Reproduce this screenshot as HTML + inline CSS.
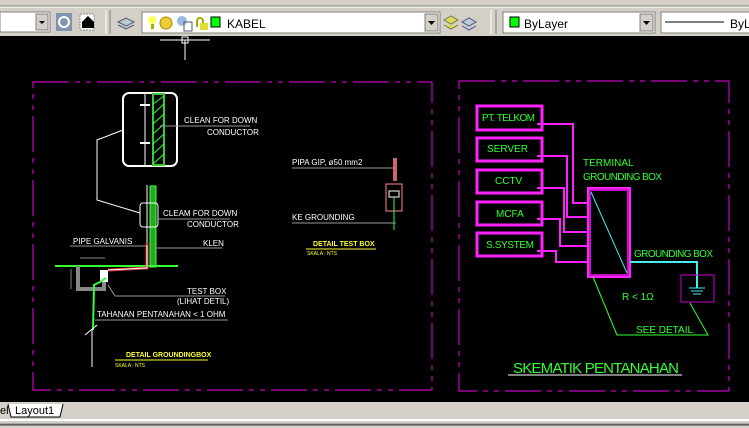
<!DOCTYPE html><html><head><style>
body{margin:0;width:749px;height:428px;overflow:hidden;background:#000;font-family:"Liberation Sans",sans-serif}
.tb{position:absolute;left:0;top:0;width:749px;height:36px;background:#d4d0c8}
svg text{font-family:"Liberation Sans",sans-serif}
</style></head><body>
<div class="tb"></div>
<svg width="749" height="428" style="position:absolute;left:0;top:0">
<line x1="0" y1="6" x2="749" y2="6" stroke="#808080"/><line x1="0" y1="7" x2="749" y2="7" stroke="#fff"/>
<rect x="0" y="12" width="50" height="20" fill="#fff" stroke="#808080"/>
<rect x="36" y="14" width="12" height="16" fill="#d4d0c8" stroke="#808080"/><path d="M39 21h6l-3 3z" fill="#000"/>
<rect x="56" y="13" width="16" height="18" fill="#7f95b0"/><circle cx="64" cy="22" r="5" fill="none" stroke="#fff" stroke-width="2"/>
<rect x="80" y="14" width="14" height="16" fill="#fff" stroke="#888" stroke-dasharray="2 1"/><path d="M82 22l6-6 6 6v6h-12z" fill="#000"/>
<line x1="106" y1="10" x2="106" y2="34" stroke="#fff"/><line x1="110" y1="10" x2="110" y2="34" stroke="#808080"/>
<path d="M118 22l8-4 8 4-8 4z M118 25l8 4 8-4" fill="#bcc" stroke="#557"/>
<rect x="142" y="12" width="298" height="21" fill="#fff" stroke="#808080"/>
<circle cx="152" cy="20" r="4" fill="#ff5"/><rect x="151" y="24" width="3" height="5" fill="#aa0"/>
<circle cx="166" cy="23" r="6" fill="#ec3" stroke="#a80"/>
<circle cx="182" cy="21" r="5" fill="#9bd"/><rect x="184" y="22" width="8" height="9" fill="none" stroke="#557"/>
<path d="M197 27v-6a3 3 0 016 0v2" fill="none" stroke="#aa0" stroke-width="2"/><rect x="200" y="23" width="8" height="7" fill="#dd3"/>
<rect x="211" y="17" width="9" height="10" fill="#0f0" stroke="#000"/>
<text x="227" y="28" font-size="12" fill="#000">KABEL</text>
<rect x="425" y="14" width="13" height="17" fill="#d4d0c8" stroke="#808080"/><path d="M428 21h7l-3.5 4z" fill="#000"/>
<path d="M444 20l7-4 7 4-7 4z M444 25l7 4 7-4" fill="#dd5" stroke="#775"/>
<path d="M462 22l7-4 7 4-7 4z M462 26l7 4 7-4" fill="#bcd" stroke="#557"/>
<line x1="491" y1="10" x2="491" y2="34" stroke="#fff"/><line x1="496" y1="10" x2="496" y2="34" stroke="#808080"/>
<rect x="503" y="12" width="152" height="21" fill="#fff" stroke="#808080"/>
<rect x="510" y="17" width="9" height="10" fill="#0f0" stroke="#000"/>
<text x="524" y="28" font-size="12" fill="#000">ByLayer</text>
<rect x="640" y="14" width="13" height="17" fill="#d4d0c8" stroke="#808080"/><path d="M643 21h7l-3.5 4z" fill="#000"/>
<rect x="661" y="12" width="100" height="21" fill="#fff" stroke="#808080"/>
<line x1="665" y1="22" x2="724" y2="22" stroke="#000"/><text x="730" y="28" font-size="12" fill="#000">ByL</text>
<line x1="160" y1="40" x2="210" y2="40" stroke="#fff"/><line x1="185" y1="40" x2="185" y2="60" stroke="#fff"/><rect x="182" y="37" width="6" height="6" fill="none" stroke="#fff"/>
<rect x="33" y="82" width="399" height="308" fill="none" stroke="#e0e" stroke-dasharray="36 6 5 6 5 6"/>
<rect x="459" y="81" width="270" height="310" fill="none" stroke="#e0e" stroke-dasharray="36 6 5 6 5 6"/>
<g font-size="8" fill="#fff">
<rect x="123" y="93" width="54" height="73" rx="6" fill="none" stroke="#fff" stroke-width="2"/>
<line x1="145" y1="93" x2="145" y2="166" stroke="#fff"/>
<rect x="153" y="94" width="11" height="71" fill="none" stroke="#3c3" stroke-width="2"/>
<path d="M153 104l11-8M153 114l11-10M153 124l11-10M153 134l11-10M153 144l11-10M153 154l11-10M153 164l11-10" stroke="#3f3"/>
<line x1="140" y1="105" x2="150" y2="105" stroke="#fff" stroke-width="2"/><line x1="140" y1="143" x2="150" y2="143" stroke="#fff" stroke-width="2"/>
<line x1="160" y1="126" x2="250" y2="126" stroke="#999"/>
<text x="184" y="123">CLEAN FOR DOWN</text><text x="207" y="135">CONDUCTOR</text>
<polyline points="140,213 97,200 97,140 123,130" fill="none" stroke="#fff"/>
<line x1="147" y1="185" x2="147" y2="243" stroke="#fff"/>
<rect x="150" y="186" width="6" height="81" fill="#2a2" stroke="#4f4"/>
<rect x="140" y="203" width="18" height="24" rx="3" fill="none" stroke="#fff"/>
<line x1="158" y1="219" x2="230" y2="219" stroke="#999"/>
<text x="163" y="216">CLEAM FOR DOWN</text><text x="187" y="227">CONDUCTOR</text>
<text x="73" y="244">PIPE GALVANIS</text><line x1="70" y1="246" x2="146" y2="246" stroke="#999"/>
<text x="203" y="246">KLEN</text><line x1="155" y1="248" x2="222" y2="248" stroke="#999"/>
<line x1="55" y1="266" x2="178" y2="266" stroke="#3f3" stroke-width="2"/>
<polyline points="147,243 147,268 108,270" fill="none" stroke="#c33" stroke-width="3"/>
<polyline points="147,245 147,268 108,270" fill="none" stroke="#fff" stroke-width="1"/>
<polyline points="78,266 78,289 104,289 104,272" fill="none" stroke="#888" stroke-width="4"/>
<polyline points="71,269 71,289" fill="none" stroke="#888"/>
<line x1="80" y1="258" x2="105" y2="258" stroke="#888"/>
<rect x="100" y="270" width="8" height="12" fill="#fff"/>
<polyline points="106,278 100,282 94,285 93,330" fill="none" stroke="#3f3" stroke-width="2"/>
<polyline points="108,285 115,296 225,296" fill="none" stroke="#999"/>
<text x="187" y="294">TEST BOX</text><text x="177" y="304">(LIHAT DETIL)</text>
<text x="97" y="317">TAHANAN PENTANAHAN &lt; 1 OHM</text><line x1="95" y1="320" x2="228" y2="320" stroke="#999"/>
<line x1="85" y1="335" x2="97" y2="325" stroke="#fff"/>
<line x1="92" y1="330" x2="92" y2="367" stroke="#fff"/>
<text x="126" y="357" fill="#ff3" font-size="7" font-weight="bold">DETAIL GROUNDINGBOX</text>
<line x1="115" y1="360" x2="208" y2="360" stroke="#ff3"/>
<text x="115" y="367" fill="#ff3" font-size="5">SKALA : NTS</text>
<text x="292" y="165">PIPA GIP, ø50 mm2</text><line x1="292" y1="168" x2="395" y2="168" stroke="#999"/>
<rect x="393" y="158" width="4" height="23" fill="#c66"/>
<rect x="386" y="184" width="16" height="27" fill="none" stroke="#f88"/>
<rect x="389" y="191" width="10" height="6" fill="none" stroke="#fff"/><line x1="394" y1="197" x2="394" y2="230" stroke="#3f3"/>
<text x="292" y="220">KE GROUNDING</text><line x1="292" y1="223" x2="396" y2="223" stroke="#999"/>
<text x="313" y="246" fill="#ff3" font-size="7" font-weight="bold">DETAIL TEST BOX</text>
<line x1="306" y1="249" x2="376" y2="249" stroke="#ff3"/>
<text x="307" y="255" fill="#ff3" font-size="5">SKALA : NTS</text>
</g>
<g font-size="10" fill="#3f3">
<g fill="none" stroke="#f2f" stroke-width="3">
<rect x="477" y="106" width="65" height="24"/><rect x="477" y="138" width="65" height="23"/>
<rect x="477" y="170" width="65" height="23"/><rect x="477" y="202" width="65" height="23"/><rect x="477" y="233" width="65" height="23"/>
<rect x="589" y="189" width="40" height="87" stroke-width="4"/>
<polyline points="537,124 573,124 573,203 589,203" stroke-width="2"/>
<polyline points="537,156 567,156 567,217 589,217" stroke-width="2"/>
<polyline points="537,188 564,188 564,232 589,232" stroke-width="2"/>
<polyline points="537,219 560,219 560,246 589,246" stroke-width="2"/>
<polyline points="537,251 556,251 556,262 589,262" stroke-width="2"/>
</g>
<rect x="590" y="190" width="38" height="85" fill="none" stroke="#808"/>
<line x1="591" y1="192" x2="627" y2="273" stroke="#4ee"/>
<text x="482" y="121" textLength="53">PT. TELKOM</text><text x="487" y="152">SERVER</text><text x="495" y="184">CCTV</text>
<text x="496" y="217">MCFA</text><text x="486" y="248" textLength="48">S.SYSTEM</text>
<text x="583" y="166">TERMINAL</text><text x="583" y="180" textLength="79">GROUNDING BOX</text>
<text x="634" y="257" textLength="79">GROUNDING BOX</text>
<polyline points="630,262 697,262 697,288" fill="none" stroke="#4ee" stroke-width="2"/>
<rect x="681" y="275" width="33" height="27" fill="none" stroke="#c0c"/>
<path d="M689 288h16M691 291h12M693 294h8" stroke="#4ee"/>
<text x="622" y="300">R &lt; 1Ω</text>
<text x="636" y="333">SEE DETAIL</text>
<polyline points="593,277 617,335 708,335 690,303" fill="none" stroke="#3f3"/>
<text x="513" y="373" font-size="15" textLength="166">SKEMATIK PENTANAHAN</text>
<line x1="508" y1="375" x2="682" y2="375" stroke="#fff"/>
</g>
<rect x="0" y="402" width="749" height="26" fill="#d4d0c8"/>
<rect x="0" y="419" width="749" height="2" fill="#fff"/>
<line x1="0" y1="424" x2="749" y2="424" stroke="#808080"/>
<line x1="0" y1="425" x2="749" y2="425" stroke="#404040"/>
<text x="0" y="414" font-size="11" fill="#000">el</text>
<path d="M8 404l3 13h49l3-13" fill="#fff" stroke="#000"/>
<text x="15" y="414" font-size="11" fill="#000">Layout1</text>
</svg>
</body></html>
